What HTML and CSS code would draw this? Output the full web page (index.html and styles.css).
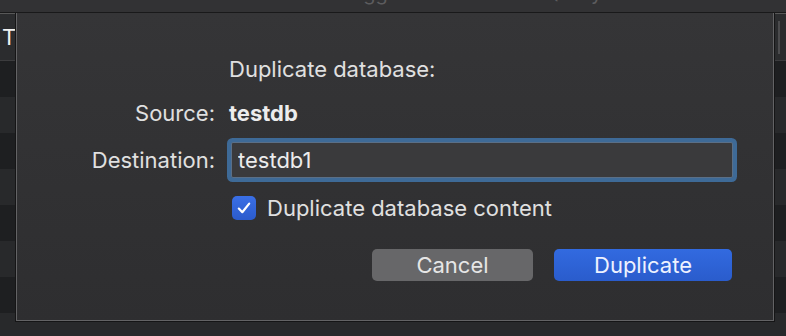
FILE: index.html
```html
<!DOCTYPE html>
<html>
<head>
    <title>Duplicate database</title>
    <link rel="stylesheet" href="styles.css">
</head>
<body>
<div class="app">
    <!-- Window toolbar, mostly hidden behind the sheet -->
    <div class="toolbar">
        <span class="toolbar-title">Structure &nbsp; Content &nbsp; Relations &nbsp; Triggers &nbsp; Table Info &nbsp; Query</span>
    </div>

    <!-- Table behind the sheet -->
    <div class="table">
        <div class="table-head">
            <span class="col-type">Type</span>
            <span class="col-divider"></span>
        </div>
        <div class="table-body"></div>
    </div>

    <!-- Duplicate database sheet -->
    <form class="sheet">
        <div class="row row-title">
            <span class="label"></span>
            <span class="title">Duplicate database:</span>
        </div>
        <div class="row row-source">
            <span class="label">Source:</span>
            <span class="value">testdb</span>
        </div>
        <div class="row row-dest">
            <label class="label" for="dest">Destination:</label>
            <input class="field" type="text" id="dest" value="testdb1">
        </div>
        <div class="row row-check">
            <span class="label"></span>
            <label class="check">
                <span class="box">
                    <svg width="16" height="16" viewBox="0 0 16 16">
                        <path d="M2.8 8.6 L6.3 12.2 L13.2 3.6" fill="none" stroke="#fff" stroke-width="2.2" stroke-linecap="round" stroke-linejoin="round"/>
                    </svg>
                </span>
                Duplicate database content
            </label>
        </div>
        <div class="row row-buttons">
            <span class="label"></span>
            <div class="buttons">
                <button type="button" class="btn btn-cancel">Cancel</button>
                <button type="submit" class="btn btn-primary">Duplicate</button>
            </div>
        </div>
    </form>
</div>
</body>
</html>
```

FILE: styles.css
```css
body {
    margin: 0;
    background: #232325;
    font-family: Inter, "Liberation Sans", sans-serif;
    color: #e0e0e0;
}

.app {
    position: relative;
    width: 786px;
    height: 336px;
    overflow: hidden;
}

.toolbar {
    height: 12px;
    background: #323234;
    border-bottom: 1px solid #19191a;
    overflow: hidden;
}

.toolbar-title {
    display: block;
    margin-top: -19px;
    padding-left: 40px;
    font-size: 20px;
    line-height: 24px;
    color: #5c5c5e;
    white-space: nowrap;
}

.table-head {
    display: flex;
    justify-content: space-between;
    align-items: center;
    height: 46px;
    background: #2b2c2e;
    border-top: 1px solid #585858;
    border-bottom: 1px solid #3c3c3e;
}

.col-type {
    padding-left: 2px;
    font-size: 22px;
    color: #f2f2f2;
}

.col-divider {
    width: 2px;
    height: 33px;
    margin-right: 6px;
    background: #4b4b4d;
}

.table-body {
    height: 280px;
    background: repeating-linear-gradient(#1e1f21 0 36px, #28292b 36px 72px);
}

/* sheet */
.sheet {
    position: absolute;
    top: 13px;
    left: 15px;
    width: 760px;
    height: 309px;
    box-sizing: border-box;
    margin: 0;
    padding-top: 45px;
    border: 1px solid #151516;
    border-top: 0;
    box-shadow: inset 1px 0 #636365, inset -1px 0 #636365, inset 0 -1px #636365;
    background: linear-gradient(#353537, #2e2e30);
    font-size: 22px;
}

.row {
    display: flex;
    align-items: center;
    gap: 11px;
}

.label {
    width: 199px;
    text-align: right;
    flex-shrink: 0;
}

.row-title, .row-source {
    height: 22px;
    line-height: 22px;
}

.title, .value {
    padding-left: 3px;
}

.value {
    font-weight: bold;
    color: #ececec;
}

.row-source {
    margin-top: 22px;
}

.row-dest {
    margin-top: 13px;
    height: 46px;
}

.field {
    box-sizing: border-box;
    width: 502px;
    height: 36px;
    margin-left: 5px;
    padding: 0 6px;
    border: 1px solid #5a6f87;
    border-radius: 2px;
    background: #3a3a3c;
    box-shadow: 0 0 0 4px #3e6a97;
    font: inherit;
    color: #ececec;
    outline: none;
}

.row-check {
    margin-top: 13px;
    height: 24px;
}

.check {
    display: flex;
    align-items: center;
    gap: 11px;
    padding-left: 6px;
}

.box {
    display: flex;
    align-items: center;
    justify-content: center;
    width: 24px;
    height: 24px;
    border-radius: 5px;
    background: linear-gradient(#3a6fe6, #2b5bcc);
}

.row-buttons {
    margin-top: 29px;
}

.buttons {
    display: flex;
    justify-content: flex-end;
    gap: 21px;
    width: 506px;
}

.btn {
    height: 32px;
    border: 0;
    border-radius: 5px;
    font: inherit;
    color: #e6e6e6;
    padding: 0;
}

.btn-cancel {
    width: 161px;
    background: #676769;
}

.btn-primary {
    width: 178px;
    background: linear-gradient(#326ae0, #2a5ccc);
    color: #eef2ff;
}
```
